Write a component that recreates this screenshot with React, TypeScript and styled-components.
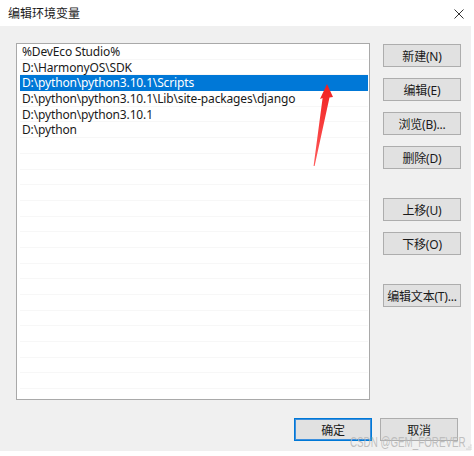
import React from "react";
import styled, { createGlobalStyle } from "styled-components";

const Global = createGlobalStyle`
  html, body { margin: 0; padding: 0; background: #ffffff; }
  body { font-family: "Segoe UI", "Noto Sans", "Noto Sans CJK SC", sans-serif; }
  * { box-sizing: border-box; }
`;

const Window = styled.div`
  position: relative;
  width: 474px;
  height: 456px;
  background: #ffffff;
  overflow: hidden;
  display: flex;
  flex-direction: column;
`;

const TitleBar = styled.div`
  height: 26px;
  display: flex;
  align-items: center;
  justify-content: space-between;
  padding: 0 10px 0 8px;
  background: #ffffff;
`;

const Title = styled.span`
  font-family: "Noto Sans CJK SC", sans-serif;
  font-size: 12px;
  color: #1a1a1a;
  line-height: 1;
`;

const Close = styled.svg`
  width: 10px;
  height: 10px;
  margin-top: 1px;
`;

const Body = styled.div`
  width: 471px;
  height: 425px;
  background: #f0f0f0;
  padding: 17px 10px 0 16px;
  display: flex;
  flex-direction: column;
`;

const Main = styled.div`
  display: flex;
  gap: 13px;
  height: 357px;
`;

const ListBox = styled.div`
  width: 354px;
  height: 357px;
  background: #ffffff;
  border: 1px solid #a9a9a9;
  padding: 0 0 0 3px;
  overflow: hidden;
`;

const Row = styled.div<{ $selected?: boolean }>`
  height: 15.7px;
  line-height: 15.7px;
  padding-left: 2px;
  margin-right: 1px;
  font-family: "Segoe UI", "Noto Sans", sans-serif;
  font-size: 12px;
  letter-spacing: -0.15px;
  white-space: nowrap;
  color: ${(p) => (p.$selected ? "#ffffff" : "#1a1a1a")};
  background: ${(p) => (p.$selected ? "#0078d7" : "transparent")};
  border-bottom: 1px solid ${(p) => (p.$selected ? "#0078d7" : "#f7f7f7")};
`;

const ButtonColumn = styled.div`
  display: flex;
  flex-direction: column;
  padding-top: 1px;
`;

const Button = styled.button<{ $space?: number; $default?: boolean }>`
  width: 78px;
  height: 23px;
  margin-top: ${(p) => p.$space ?? 0}px;
  padding: 0;
  background: #e1e1e1;
  border: 1px solid ${(p) => (p.$default ? "#0078d7" : "#adadad")};
  box-shadow: ${(p) => (p.$default ? "inset 0 0 0 1px #3d8fdc" : "none")};
  font-family: "Segoe UI", "Noto Sans", "Noto Sans CJK SC", sans-serif;
  font-size: 12px;
  color: #1a1a1a;
  display: flex;
  align-items: center;
  justify-content: center;
  letter-spacing: -0.2px;
`;

const Footer = styled.div`
  display: flex;
  justify-content: flex-end;
  gap: 8px;
  margin-top: 18px;
  padding-right: 3px;
`;

const Watermark = styled.div`
  position: absolute;
  left: 350px;
  top: 434px;
  font-family: "Liberation Sans", sans-serif;
  font-size: 14px;
  line-height: 16px;
  color: rgba(185, 185, 185, 0.9);
  transform: scaleX(0.7);
  transform-origin: left center;
  white-space: nowrap;
`;

const Arrow = styled.svg`
  position: absolute;
  left: 0;
  top: 0;
  width: 474px;
  height: 456px;
  pointer-events: none;
`;

const Grip = styled.svg`
  position: absolute;
  left: 466px;
  top: 444px;
  width: 6px;
  height: 6px;
`;

const items = [
  "%DevEco Studio%",
  "D:\\HarmonyOS\\SDK",
  "D:\\python\\python3.10.1\\Scripts",
  "D:\\python\\python3.10.1\\Lib\\site-packages\\django",
  "D:\\python\\python3.10.1",
  "D:\\python",
];

export default function App() {
  const rows = [...items, ...Array(18).fill("")];
  return (
    <>
      <Global />
      <Window>
        <TitleBar>
          <Title>编辑环境变量</Title>
          <Close viewBox="0 0 10 10">
            <path d="M0.5 0.5 L9.5 9.5 M9.5 0.5 L0.5 9.5" stroke="#333" strokeWidth="1" fill="none" />
          </Close>
        </TitleBar>
        <Body>
          <Main>
            <ListBox>
              {rows.map((t, i) => (
                <Row key={i} $selected={i === 2}>
                  {t}
                </Row>
              ))}
            </ListBox>
            <ButtonColumn>
              <Button>新建(N)</Button>
              <Button $space={11}>编辑(E)</Button>
              <Button $space={11}>浏览(B)...</Button>
              <Button $space={11}>删除(D)</Button>
              <Button $space={29}>上移(U)</Button>
              <Button $space={11}>下移(O)</Button>
              <Button $space={29}>编辑文本(T)...</Button>
            </ButtonColumn>
          </Main>
          <Footer>
            <Button $default>确定</Button>
            <Button>取消</Button>
          </Footer>
        </Body>
        <Arrow viewBox="0 0 474 456">
          <defs>
            <linearGradient id="ag" x1="0" y1="1" x2="0" y2="0">
              <stop offset="0" stopColor="#ff5a5a" />
              <stop offset="1" stopColor="#f02020" />
            </linearGradient>
          </defs>
          <path
            d="M313.6 166 L322.6 98 L320 99 L327 84 L333 97 L329.5 97.5 L314.6 166 Z"
            fill="url(#ag)"
          />
        </Arrow>
        <Watermark>CSDN @GEM_FOREVER</Watermark>
        <Grip viewBox="0 0 6 6">
          <circle cx="5" cy="1" r="0.6" fill="#b0b0b0" />
          <circle cx="3" cy="3" r="0.6" fill="#b0b0b0" />
          <circle cx="5" cy="3" r="0.6" fill="#b0b0b0" />
          <circle cx="1" cy="5" r="0.6" fill="#b0b0b0" />
          <circle cx="3" cy="5" r="0.6" fill="#b0b0b0" />
          <circle cx="5" cy="5" r="0.6" fill="#b0b0b0" />
        </Grip>
      </Window>
    </>
  );
}
